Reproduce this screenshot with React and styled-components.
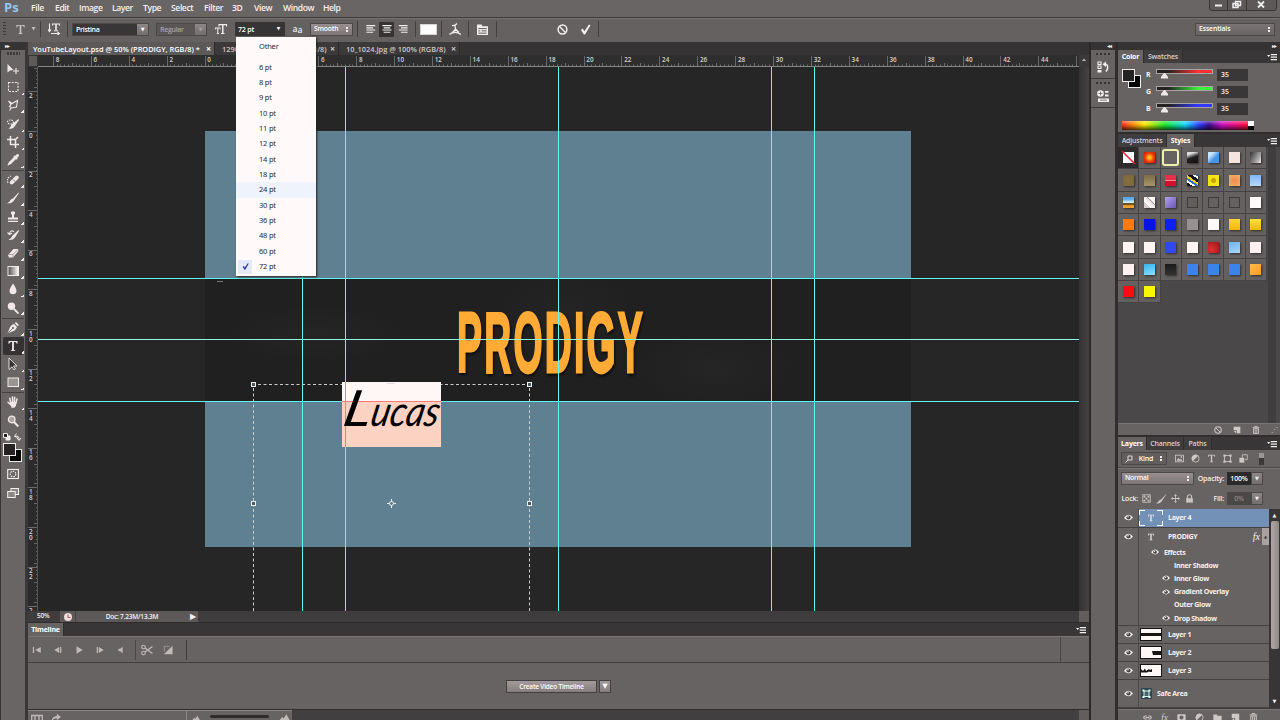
import styled, { createGlobalStyle } from "styled-components";

const MENUS = [
  ["File", 24], ["Edit", 24], ["Image", 33], ["Layer", 31], ["Type", 28], ["Select", 33],
  ["Filter", 28], ["3D", 22], ["View", 29], ["Window", 40], ["Help", 20],
];

const SIZES = ["6", "8", "9", "10", "11", "12", "14", "18", "24", "30", "36", "48", "60", "72"];

const NONE = "linear-gradient(45deg, #fff 45%, #fff 55%)";

const STYLES = [
  NONE,
  "radial-gradient(#ffd21c 10%, #f33c0c 55%, #b81a0a)",
  "#65625f",
  "linear-gradient(160deg, #ddd 20%, #222 50%, #111)",
  "linear-gradient(135deg, #c8e6ff 25%, #4794e6 60%)",
  "#f5e4e0",
  "linear-gradient(120deg, #333, #aaa 70%, #eee)",
  "radial-gradient(#8a6f3c, #77683f)",
  "linear-gradient(#7d6b46, #a8956a)",
  "linear-gradient(#e8304a 45%, #ff8b93 50%, #d3102c 56%)",
  "repeating-linear-gradient(35deg, #111 0 3px, #fff 3px 5px, #2b6fc8 5px 7px, #f0d21e 7px 9px)",
  "radial-gradient(#c9a500 25%, #f6e516 40%)",
  "radial-gradient(#f08a4e, #f5b365)",
  "linear-gradient(#7db7f4, #b4d9fb)",
  "linear-gradient(#5ca9e8 20%, #f4fbff 55%, #3a2504 60%, #f0a32a 80%)",
  "linear-gradient(45deg, #d8cfcc 30%, #fff 32%, #e8dedc 60%, #9c9492 64%, #fff 70%)",
  "linear-gradient(135deg, #b2a2ee, #6a56b8)",
  "#615e5c",
  "#646160",
  "#646160",
  "#fffafa",
  "#ff7a0a",
  "#0712e6",
  "#0d1ff2",
  "#979192",
  "#fff8f8",
  "linear-gradient(#ffd52e, #f5b411)",
  "linear-gradient(#ffe03c, #f2b50e)",
  "#fff4f4", "#fff4f4", "#3048ee", "#fff4f4",
  "radial-gradient(at 30% 70%, #e03030, #961a1c)",
  "linear-gradient(160deg, #6fb2ec, #a9d8fb)",
  "#fff0f0",
  "#fff0f2",
  "linear-gradient(160deg, #36b4ea, #8be0ff)",
  "linear-gradient(#1a1a1a, #333)",
  "#3b83e8", "#3b83e8", "#3b83e8",
  "linear-gradient(135deg, #ffbd50, #f79a1c)",
  "#fa0d10",
  "#f8f800",
];

// swatches that are only an outline in the grid
const OUTLINED = [17, 18, 19];

const EFFECTS = [
  ["Inner Shadow", false],
  ["Inner Glow", true],
  ["Gradient Overlay", true],
  ["Outer Glow", false],
  ["Drop Shadow", true],
];

const CHANNELS = [
  ["R", "#ff3030"],
  ["G", "#3cf03c"],
  ["B", "#3438ff"],
];

/* ---------------------- ICONS ---------------------- */

const Icon = ({ size = 12, children }) => (
  <svg width={size} height={size} viewBox="0 0 12 12" fill="currentColor" stroke="none">
    {children}
  </svg>
);

const line = { fill: "none", stroke: "currentColor", strokeWidth: 1.1 };

const TypeGlyph = () => <path d="M1.5 1H10.500V3.800H9.700Q9.500 2 8.200 2H6.900V9.400Q6.900 10.200 8.200 10.300V11H3.800V10.300Q5.100 10.200 5.100 9.400V2H3.800Q2.500 2 2.300 3.800H1.500Z" />;

const ICONS = {
  move: (
    <>
      <path d="M0.500 1V9.500L2.800 7.500L6.500 7Z" />
      <path {...line} d="M9 5V11M6 8H12" />
    </>
  ),
  marquee: <rect {...line} x="1.500" y="1.500" width="9.500" height="9" strokeDasharray="2 1.200" />,
  lasso: <path {...line} d="M1.500 2L5 4.500L10.500 1.500L9.500 8L4.500 9L2.500 7.500L4 5.500L1.500 2M4 9L2.500 11.500" />,
  quick: (
    <>
      <ellipse {...line} cx="3.500" cy="4" rx="3" ry="2" strokeDasharray="1.500 1" />
      <path d="M11.500 1L12 2L7.500 8.500Q6 11.500 1.500 10.500Q4 9 4.500 6.500Z" />
    </>
  ),
  crop: <path {...line} strokeWidth="1.500" d="M3.500 0V8.500H12M0 3.500H8.500V12M8 4L11 1" />,
  dropper: <path d="M8 2Q10.500 -1 11.700 0.500Q13 1.800 10 4L10.600 5L9.800 5.800L9 5L4 10L1 11.500L0.500 11L2 8L7 3L6.300 2.200L7 1.500Z" />,
  heal: (
    <>
      <path d="M3.500 7L8.500 2Q10 1 11.300 2.300Q12.300 3.500 11 5L6 10Q4.500 11 3.200 9.800Q2.200 8.500 3.500 7Z" />
      <path {...line} strokeDasharray="1.500 1" d="M1 9Q-1 4 4 2" />
      <path d="M6 5.500L8 7.500" stroke="#6a6665" strokeWidth="1" />
    </>
  ),
  brush: <path d="M11.500 0.500L12 1L7.300 8Q5.500 11.500 0 11.500Q2.500 10 3.500 8Q4.500 6.500 6 6.500Z" />,
  stamp: <path d="M4 1Q6 -0.500 8 1Q8.500 2.500 7 4V6.500H11V8.500H1V6.500H5V4Q3.500 2.500 4 1ZM1 9.700H11V11H1Z" />,
  history: (
    <>
      <path d="M11.500 1L12 2L8 8.500Q6 11.500 1.500 11Q4.500 9.500 5.500 6.500Z" />
      <path {...line} d="M7 2.500Q3 0.500 2.500 5M0.500 3.500L2.500 5.500L5 4" />
    </>
  ),
  eraser: (
    <>
      <path d="M1 8L6.500 2H11L11.500 4L6 10.500H2Z" />
      <path d="M1.500 7.500H6L11 2.500M6 7.500V10" fill="none" stroke="#8b8584" strokeWidth="0.700" />
    </>
  ),
  gradient: (
    <>
      <defs>
        <linearGradient id="toolGrad">
          <stop offset="0" stopColor="#4f4b4b" />
          <stop offset="1" stopColor="#fff" />
        </linearGradient>
      </defs>
      <rect x="1" y="1.500" width="10.500" height="9" fill="url(#toolGrad)" stroke="currentColor" />
    </>
  ),
  blur: <path d="M6 0.500Q9.500 5.500 9.500 8Q9.200 11.300 6 11.300Q2.800 11.300 2.500 8Q2.500 5.500 6 0.500Z" />,
  dodge: (
    <>
      <circle cx="4.500" cy="4.300" r="3.700" />
      <path {...line} strokeWidth="1.800" d="M7 7L11.500 11.500" />
    </>
  ),
  pen: (
    <>
      <path d="M9 0L12 3L10.700 4.300L7.700 1.300ZM7 2L10 5Q9 9 2.500 10.500L0.500 11.500L1.500 9Q3 3 7 2Z" />
      <path d="M1 11L5.500 6.500" stroke="#5b5756" strokeWidth="0.800" />
      <circle cx="6" cy="6" r="1" fill="#5b5756" />
    </>
  ),
  type: <TypeGlyph />,
  path: <path d="M2 0L10 8L6.500 8L8.500 11L7 12L5 8.800L2 11.500Z" fill="#343232" stroke="currentColor" strokeWidth="0.900" />,
  rect: <rect x="1" y="2" width="10.500" height="8.500" fill="#999392" stroke="currentColor" strokeWidth="1" />,
  hand: (
    <>
      <path d="M3 6H9.500L9 9.500L7.500 11.700H4.500Z" />
      <path {...line} strokeWidth="1.500" strokeLinecap="round" d="M3.700 7L2.800 2.200M5.500 6V0.900M7.300 6L7.700 1.200M8.900 7L10 3M4 9L1 6.300" />
    </>
  ),
  zoom: (
    <>
      <circle cx="4.700" cy="4.500" r="3.300" fill="#aaa4a3" stroke="currentColor" strokeWidth="1.300" />
      <path {...line} strokeWidth="1.900" d="M7 7L11.300 11.500" />
    </>
  ),
  mask: (
    <>
      <rect {...line} x="0.700" y="1.500" width="10.700" height="9" />
      <circle {...line} cx="6" cy="6" r="2.800" strokeDasharray="1.600 0.900" />
    </>
  ),
  screen: (
    <>
      <rect x="4" y="1.500" width="7.500" height="6" fill="#8b8584" stroke="currentColor" />
      <rect x="0.700" y="4.500" width="7.500" height="6" fill="#8b8584" stroke="currentColor" />
    </>
  ),
  orient: (
    <>
      <path d="M4 0.500H12V2.800H11.200V1.500H8.800V7H7.200V1.500H4.800V2.800H4ZM6 7.300H10V8.300H6Z" />
      <path {...line} d="M1.500 0.500V8M0 6.500L1.500 8.500L3 6.500M3 10.500H11M9.500 9L11.500 10.500L9.500 12" />
    </>
  ),
  sizes: <path d="M3.500 1H12V3.500H11V2.300H8.500V10H9.500V11H6V10H7V2.300H4.500V3.500H3.500ZM0 4.500H5.500V6.500H4.800V5.500H3.300V10H4V11H1.800V10H2.300V5.500H0.800V6.500H0Z" />,
  left: <path {...line} strokeWidth="1.400" d="M0.500 2H11M0.500 4.600H8.500M0.500 7.200H11M0.500 9.900H8.500" />,
  center: <path {...line} strokeWidth="1.400" d="M0.500 2H11.500M2 4.600H10M0.500 7.200H11.500M2 9.900H10" />,
  right: <path {...line} strokeWidth="1.400" d="M1 2H11.500M3.500 4.600H11.500M1 7.200H11.500M3.500 9.900H11.500" />,
  warp: <path {...line} strokeWidth="1.300" d="M3 2.500Q6 3 8 0.500M6 2.500L6.500 6.500M6.500 6L3.500 9.500M6.500 6L10 9.500M0.500 11.500Q6 7 12 11.500" />,
  panel: (
    <>
      <path d="M0 0.500H5L6 2.500H12V12H0Z" />
      <path d="M1.500 5H10.500M1.500 7.500H3.500M5 7.500H10.500M1.500 10H10.500" stroke="#514d4d" strokeWidth="1" />
    </>
  ),
  cancel: (
    <>
      <circle {...line} strokeWidth="1.600" cx="6" cy="6" r="4.800" />
      <path {...line} strokeWidth="1.500" d="M2.800 2.800L9.200 9.200" />
    </>
  ),
  check: <path d="M1 6.500L3 5L4.800 7.800L9.800 0.500L11.500 1.300L5.500 11.500H4.300Z" />,
  eye: (
    <>
      <path d="M0 6.500Q5.500 -1.500 12 6Q6.500 13 0 6.500Z" />
      <circle cx="6" cy="6" r="2.800" fill="#484545" />
      <circle cx="5.300" cy="5" r="1" />
    </>
  ),
  menu: <path d="M0 3.500H4L2 6ZM4.500 2.500H12V4H4.500ZM4.500 5.500H12V7H4.500ZM4.500 8.500H12V10H4.500Z" />,
  historyPanel: (
    <>
      <path {...line} d="M1 1H4V3.500H1ZM1 5H4V7.500H1Z" />
      <path d="M0.500 9H4.500V11.500H0.500Z" />
      <path {...line} strokeWidth="1.500" d="M7 3.500Q11.500 2.500 10.500 8L9 10.500" />
      <path d="M9 0.500V6L5.500 3.300Z" />
    </>
  ),
  propsPanel: (
    <>
      <circle cx="3.500" cy="3.500" r="3.300" />
      <path d="M8 1H11.500V2.800H8ZM8 4.500H11.500V6.500H8ZM1 8.500H12V12H1Z" />
      <path d="M3.500 1.500V5.500M1.500 3.500H5.500M3 10.200H10" stroke="#625e5d" strokeWidth="0.800" />
    </>
  ),
  newDoc: <path d="M1 1H11V11H5.500V6.500H1ZM1 7.500H4.500V11Z" />,
  trash: <path {...line} strokeWidth="1.300" d="M1 2.500H11M4 2V0.800H8V2M2.300 4H9.700V11.300H2.300ZM4.800 5V10.500M7.200 5V10.500" />,
  image: (
    <>
      <rect {...line} x="0.600" y="1.600" width="10.800" height="8.800" />
      <path d="M2 9L4.500 5L6.500 7.500L8 6L10 9ZM7.500 3H9.500V5H7.500Z" />
    </>
  ),
  adjust: (
    <>
      <circle {...line} cx="6" cy="6" r="4.800" />
      <path d="M9.400 2.600A4.800 4.800 0 0 0 2.600 9.400Z" />
    </>
  ),
  shape: (
    <>
      <rect {...line} x="2" y="2" width="8" height="8" />
      <path d="M0.500 0.500H3.500V3.500H0.500ZM8.500 0.500H11.500V3.500H8.500ZM0.500 8.500H3.500V11.500H0.500ZM8.500 8.500H11.500V11.500H8.500Z" />
    </>
  ),
  smart: (
    <>
      <path {...line} d="M4.500 5V1H11V7.500H8" />
      <path d="M0.500 5H7V11.500H0.500Z" />
    </>
  ),
  checker: (
    <>
      <rect {...line} x="1" y="1" width="10" height="10" />
      <path d="M2 2H4.500V4.500H2ZM7.500 2H10V4.500H7.500ZM4.700 4.700H7.300V7.300H4.700ZM2 7.500H4.500V10H2ZM7.500 7.500H10V10H7.500Z" />
    </>
  ),
  cross: <path d="M6 0L8 2.500H6.600V5.400H9.500V4L12 6L9.500 8V6.600H6.600V9.500H8L6 12L4 9.500H5.400V6.600H2.500V8L0 6L2.500 4V5.400H5.400V2.500H4Z" />,
  lock: (
    <>
      <path {...line} strokeWidth="1.400" d="M3.300 6V3Q3.500 1 6 1Q8.500 1 8.700 3V6" />
      <path d="M1.500 5.500H10.500V11.500H1.500Z" />
    </>
  ),
  link: <path {...line} strokeWidth="1.500" d="M5 4H3Q1 4 1 6Q1 8 3 8H5M7 4H9Q11 4 11 6Q11 8 9 8H7M3.500 6H8.500" />,
  maskAdd: <path fillRule="evenodd" d="M0.500 1.500H11.500V10.500H0.500ZM6 3.300A2.700 2.700 0 1 0 6.010 3.300Z" />,
  folder: <path d="M0.500 2H5L6 3.500H11.500V11H0.500Z" />,
  first: <path d="M1 2.500H2.500V9.500H1ZM10.500 2.500V9.500L4 6Z" />,
  prev: <path d="M8.500 2.500H10V9.500H8.500ZM7.500 2.500V9.500L1.500 6Z" />,
  play: <path d="M3 1.500V10.500L10.500 6Z" />,
  next: <path d="M2 2.500H3.500V9.500H2ZM4.500 2.500V9.500L10.500 6Z" />,
  speaker: <path d="M3 4.500H5L8 2V10L5 7.500H3Z" />,
  scissors: (
    <>
      <circle {...line} cx="2.500" cy="3" r="1.800" />
      <circle {...line} cx="2.500" cy="9" r="1.800" />
      <path {...line} strokeWidth="1.400" d="M4 4L11.500 9.500M4 8L11.500 2.500" />
    </>
  ),
  split: (
    <>
      <path d="M11.500 1V11H1Z" />
      <path {...line} d="M1.500 8V1.500H8" strokeWidth="0.700" />
    </>
  ),
  film: <path {...line} strokeWidth="1.300" d="M0.700 3.500H11.300V9H0.700ZM4 3.500V9M8 3.500V9" />,
  share: <path d="M7 1L12 4.800L7 8.500V6.300Q2.500 6 1 10.500Q0.500 4 7 3.500Z" />,
  mountain: <path d="M0 9.500L3.500 5.500L5 7L8 2.500L12 9.500Z" />,
};

const Glyph = ({ name, size }) => <Icon size={size}>{ICONS[name]}</Icon>;

const TOOL_GROUPS = [
  ["move", "marquee", "lasso", "quick", "crop", "dropper"],
  ["heal", "brush", "stamp", "history", "eraser", "gradient", "blur", "dodge"],
  ["pen", "type", "path", "rect"],
  ["hand", "zoom"],
];

/* ---------------------- RULERS ---------------------- */

const range = (n) => Array.from({ length: n }, (_, i) => i);

const HorizontalRuler = () => {
  const step = 37.9;
  return (
    <svg width="1041" height="12">
      {range(28).map((i) => {
        const x = 167 + (i - 4) * step;
        return (
          <g key={i}>
            <path d={`M${Math.floor(x) + 0.5} 1V12`} stroke="#666" />
            <RulerText x={x + 2.3} y="7">{Math.abs((i - 4) * 2)}</RulerText>
          </g>
        );
      })}
      {range(275).map((i) => (
        <path key={i} d={`M${Math.floor(15.400 + i * step / 10) + 0.5} ${i % 5 === 0 ? 8 : 9.500}V12`} stroke="#6f6f6f" />
      ))}
      <path d="M0 11.500H1041" stroke="#858585" />
    </svg>
  );
};

const VerticalRuler = () => {
  const step = 39.6;
  return (
    <svg width="10" height="544">
      {range(14).map((i) => {
        const y = 64 + (i - 1) * step;
        return (
          <g key={i}>
            <path d={`M0 ${Math.round(y) + 0.5}H10`} stroke="#6b6b6b" />
            {String(Math.abs((i - 1) * 2)).split("").map((digit, n) => (
              <RulerText key={n} x="1" y={y + 6.5 + n * 6}>{digit}</RulerText>
            ))}
          </g>
        );
      })}
      {range(137).map((i) => (
        <path key={i} d={`M${i % 5 === 0 ? 6 : 8} ${Math.round(i * step / 10 + 0.5) + 0.5}H10`} stroke="#666" />
      ))}
      <path d="M9.500 0V544" stroke="#555" />
    </svg>
  );
};

/* ---------------------- DOCUMENT ---------------------- */

const Canvas = () => (
  <Board>
    <Artboard>
      <Band />
    </Artboard>
    <Artwork width="1041" height="544" viewBox="38 67 1041 544">
      <Headline x="457" y="372" textLength="188" lengthAdjust="spacingAndGlyphs">PRODIGY</Headline>
      <path d="M217 281.500H223" stroke="#777" />
      <g stroke="#62f4ee" strokeWidth="1">
        <path d="M38 278.500H1079M38 401.500H1079M302.500 67V611M345.500 67V611M558.500 67V611M771.500 67V611M814.500 67V611" />
        <path d="M38 339.500H1079" stroke="#8cf5dc" />
      </g>
      <path d="M253.500 611V384.500H529.500V611" fill="none" stroke="#ccc" strokeDasharray="3 2.500" />
      <rect x="342" y="382" width="99" height="65" fill="#fff6f6" />
      <rect x="342" y="401" width="99" height="46" fill="#fcd3c3" />
      <path d="M342 401.500H441M345.500 382V447" stroke="#ff7777" />
      <path d="M387 383.500H395" stroke="#ddd" />
      <Script x="342" y="426" transform="translate(89.5 0) skewX(-12)">
        <tspan fontSize="50" textLength="28" lengthAdjust="spacingAndGlyphs">L</tspan>
        <tspan fontSize="42" textLength="68" lengthAdjust="spacingAndGlyphs">ucas</tspan>
      </Script>
      {[[253, 384], [529, 384], [253, 503], [529, 503]].map(([x, y]) => (
        <rect key={`${x}-${y}`} x={x - 1.500} y={y - 1.500} width="4" height="4" fill="#4b5a61" stroke="#eee" />
      ))}
      <path d="M391.500 499V508M387 503.500H396" stroke="#eee" />
      <circle cx="391.500" cy="503.500" r="2" fill="#5f8090" stroke="#eee" />
    </Artwork>
  </Board>
);

const Timeline = () => (
  <TimelinePanel>
    <TabStrip>
      <PanelTab $active $w={36}>Timeline</PanelTab>
      <Spacer />
      <PanelMenu><Glyph name="menu" size={10} /></PanelMenu>
    </TabStrip>
    <TimelineControls>
      <PlaybackButtons>
        {["first", "prev", "play", "next", "speaker"].map((name) => (
          <Glyph key={name} name={name} size={10} />
        ))}
      </PlaybackButtons>
      <EditButtons>
        <Glyph name="scissors" size={12} />
        <Glyph name="split" size={10} />
      </EditButtons>
      <TimelineTail />
    </TimelineControls>
    <TimelineBody>
      <CreateButton>Create Video Timeline</CreateButton>
      <CreateArrow>▼</CreateArrow>
    </TimelineBody>
    <TimelineFooter>
      <FooterLeft>
        <Glyph name="film" size={12} />
        <Glyph name="share" size={10} />
      </FooterLeft>
      <FooterZoom>
        <Glyph name="mountain" size={8} />
        <ZoomTrack />
        <Glyph name="mountain" size={11} />
      </FooterZoom>
      <FooterScroll />
    </TimelineFooter>
  </TimelinePanel>
);

/* ---------------------- PANELS ---------------------- */

const ColorPanel = () => (
  <>
    <TabStrip>
      <PanelTab $active $w={26}>Color</PanelTab>
      <PanelTab $w={39}>Swatches</PanelTab>
      <Spacer />
      <PanelMenu><Glyph name="menu" size={10} /></PanelMenu>
    </TabStrip>
    <ColorBody>
      <ColorMain>
        <SwatchPair $size={13} $shift={6}><i /><i /></SwatchPair>
        <Sliders>
          {CHANNELS.map(([name, color]) => (
            <SliderRow key={name}>
              <b>{name}</b>
              <Track $color={color}><Knob /></Track>
              <ValueBox>35</ValueBox>
            </SliderRow>
          ))}
        </Sliders>
      </ColorMain>
      <Spectrum><SpectrumEnd /></Spectrum>
    </ColorBody>
  </>
);

const StylesPanel = () => (
  <>
    <TabStrip>
      <PanelTab $w={49}>Adjustments</PanelTab>
      <PanelTab $active $w={28}>Styles</PanelTab>
      <Spacer />
      <PanelMenu><Glyph name="menu" size={10} /></PanelMenu>
    </TabStrip>
    <StylesBody>
      <StyleGrid>
        {STYLES.map((fill, i) => (
          <StyleCell key={i} $dark={i === 0}>
            <StyleChip $fill={fill} $outlined={OUTLINED.includes(i)} $picked={i === 2} $slash={i === 0}>
              {i === 0 && (
                <svg width="15" height="15"><path d="M1 1L14 14" stroke="#e8202c" strokeWidth="1.500" /></svg>
              )}
            </StyleChip>
          </StyleCell>
        ))}
      </StyleGrid>
    </StylesBody>
    <StylesFooter>
      <Glyph name="cancel" size={8} />
      <Glyph name="newDoc" size={8} />
      <Glyph name="trash" size={8} />
      <Grip>⋰</Grip>
    </StylesFooter>
  </>
);

const LayersPanel = () => (
  <>
    <TabStrip>
      <PanelTab $active $w={29}>Layers</PanelTab>
      <PanelTab $w={37}>Channels</PanelTab>
      <PanelTab $w={28}>Paths</PanelTab>
      <Spacer />
      <PanelMenu><Glyph name="menu" size={10} /></PanelMenu>
    </TabStrip>
    <FilterRow>
      <KindSelect>
        <svg width="8" height="8" viewBox="0 0 8 8"><path d="M3 5L0.500 7.500M3 1H7V5H3Z" fill="none" stroke="#ddd" /></svg>
        <span>Kind</span>
        <Stepper />
      </KindSelect>
      <FilterIcons>
        {["image", "adjust", "type", "shape", "smart"].map((name) => (
          <Glyph key={name} name={name} size={9} />
        ))}
        <FilterToggle />
      </FilterIcons>
    </FilterRow>
    <BlendRow>
      <BlendSelect><span>Normal</span><Stepper /></BlendSelect>
      <FieldLabel $w={30}>Opacity:</FieldLabel>
      <NumberBox>100%</NumberBox>
      <DropArrow>▼</DropArrow>
    </BlendRow>
    <LockRow>
      <FieldLabel $w={20}>Lock:</FieldLabel>
      <LockIcons>
        <Glyph name="checker" size={9} />
        <Glyph name="brush" size={10} />
        <Glyph name="cross" size={9} />
        <Glyph name="lock" size={9} />
      </LockIcons>
      <FieldLabel $w={15}>Fill:</FieldLabel>
      <NumberBox $muted>0%</NumberBox>
      <DropArrow>▼</DropArrow>
    </LockRow>
    <LayerArea>
      <LayerList>
        <LayerRow $selected>
          <EyeCell><Glyph name="eye" size={9} /></EyeCell>
          <TypeThumb $framed><Glyph name="type" size={8} /></TypeThumb>
          <LayerName>Layer 4</LayerName>
        </LayerRow>
        <LayerRow $open>
          <EyeCell><Glyph name="eye" size={9} /></EyeCell>
          <TypeThumb><Glyph name="type" size={8} /></TypeThumb>
          <LayerName>PRODIGY</LayerName>
          <Fx>fx</Fx>
          <FxArrow>▲</FxArrow>
        </LayerRow>
        <EffectBlock>
          <EyeCell />
          <EffectList>
            <EffectHead><Glyph name="eye" size={8} /><span>Effects</span></EffectHead>
            {EFFECTS.map(([name, on]) => (
              <Effect key={name}>
                <EffectEye>{on && <Glyph name="eye" size={8} />}</EffectEye>
                {name}
              </Effect>
            ))}
          </EffectList>
        </EffectBlock>
        {[1, 2, 3].map((n) => (
          <LayerRow key={n}>
            <EyeCell><Glyph name="eye" size={9} /></EyeCell>
            <Thumb>
              {n === 1 && <path d="M0 4H20V7H0Z" fill="#181515" />}
              {n === 2 && <path d="M11 4H20V8H12Z" fill="#181515" />}
              {n === 3 && <path d="M0 4L2 6L4 3.500L5 6L8 4L9 5L11 4V7H9L8 6.500L6 7.500H0Z" fill="#181515" />}
            </Thumb>
            <LayerName>Layer {n}</LayerName>
          </LayerRow>
        ))}
        <LayerRow $tall>
          <EyeCell><Glyph name="eye" size={9} /></EyeCell>
          <SafeIcon>
            <svg width="11" height="11" viewBox="0 0 11 11">
              <path d="M0 0H11V11H0Z" fill="#2d4650" />
              <path d="M3 3H8V8.500H3Z" fill="#45656f" stroke="#d9f4e4" />
              <path d="M1.500 1.500H3.500V3.500H1.500ZM7.500 1.500H9.500V3.500H7.500ZM1.500 8H3.500V10H1.500ZM7.500 8H9.500V10H7.500Z" fill="#e8fbef" />
            </svg>
          </SafeIcon>
          <SafeName>Safe Area</SafeName>
        </LayerRow>
      </LayerList>
      <LayerScroll>
        <span>▲</span>
        <LayerThumb />
        <Spacer />
        <span>▼</span>
      </LayerScroll>
    </LayerArea>
    <LayersFooter>
      <Glyph name="link" size={9} />
      <FooterFx>fx</FooterFx>
      {["maskAdd", "adjust", "folder", "newDoc", "trash"].map((name) => (
        <Glyph key={name} name={name} size={9} />
      ))}
    </LayersFooter>
  </>
);

const App = () => (
  <Window>
    <Global />
    <MenuBar>
      <Logo>Ps</Logo>
      {MENUS.map(([label, w]) => (
        <MenuItem key={label} $w={w}>{label}</MenuItem>
      ))}
      <Spacer />
      <WindowButtons>
        <svg width="68" height="11">
          <path d="M0.500 0V8Q0.500 10.500 3 10.500H65Q67.500 10.500 67.500 8V0M18.500 0V10M37.500 0V10" fill="#5d5959" stroke="#383636" />
          <path d="M6 5.500H13" stroke="#eee" strokeWidth="2" />
          <path d="M26.500 1.500H31.500V5.500H26.500ZM24 3.500H29V7.500H24Z" fill="#5d5959" stroke="#eee" strokeWidth="1.500" />
          <path d="M49 1.500L55 7.500M55 1.500L49 7.500" stroke="#eee" strokeWidth="1.800" />
        </svg>
      </WindowButtons>
    </MenuBar>

    <OptionsBar>
      <DragDots />
      <OptionCell $w={30} $dim><Glyph name="type" size={11} /><Caret>▼</Caret></OptionCell>
      <Divider />
      <OptionCell $w={26}><Glyph name="orient" size={12} /></OptionCell>
      <Divider />
      <Combo $w={77} $gap={4}><span>Pristina</span><ComboArrow>▼</ComboArrow></Combo>
      <Combo $w={51} $gap={7} $off><span>Regular</span><ComboArrow>▼</ComboArrow></Combo>
      <OptionCell $w={28}><Glyph name="sizes" size={12} /></OptionCell>
      <SizeCombo>
        <span>72 pt</span><Caret>▼</Caret>
        <SizeMenu>
          <SizeItem $first>Other</SizeItem>
          {SIZES.map((size) => (
            <SizeItem key={size} $hover={size === "24"}>
              {size === "72" && <CheckBox><Glyph name="check" size={7} /></CheckBox>}
              {size} pt
            </SizeItem>
          ))}
        </SizeMenu>
      </SizeCombo>
      <OptionCell $w={25}><Aa>a</Aa><Aa $low>a</Aa></OptionCell>
      <SmoothSelect><span>Smooth</span><Stepper /></SmoothSelect>
      <Divider $gap={4} />
      <AlignGroup>
        <AlignButton><Glyph name="left" size={10} /></AlignButton>
        <AlignButton $on><Glyph name="center" size={10} /></AlignButton>
        <AlignButton><Glyph name="right" size={10} /></AlignButton>
      </AlignGroup>
      <Divider />
      <OptionCell $w={25}><TextColor /></OptionCell>
      <Divider />
      <OptionCell $w={26}><Glyph name="warp" size={12} /></OptionCell>
      <Divider />
      <OptionCell $w={27}><Glyph name="panel" size={11} /></OptionCell>
      <Divider />
      <Commit>
        <Glyph name="cancel" size={11} />
        <Glyph name="check" size={11} />
      </Commit>
      <Divider />
      <Spacer />
      <Workspace><span>Essentials</span><Stepper /></Workspace>
    </OptionsBar>

    <Main>
      <ToolColumn>
        <ColumnHead $left>▸▸</ColumnHead>
        <ToolGrip />
        {TOOL_GROUPS.map((group, g) => (
          <ToolGroup key={g}>
            {group.map((name) => (
              <Tool key={name} $on={name === "type"} $plain={name === "move" || name === "zoom"}>
                <Glyph name={name} size={12} />
              </Tool>
            ))}
          </ToolGroup>
        ))}
        <SwapRow>
          <svg width="19" height="8">
            <path d="M3 3H7V7H3Z" fill="#eee" stroke="#eee" />
            <path d="M0.500 0.500H4.500V4.500H0.500Z" fill="#222" stroke="#eee" />
            <path d="M12 3.500Q16.500 2 16 7M13.500 0.500L11.500 3.500L14.500 4.500M14 5L16 7.500L18 5" fill="none" stroke="#eee" />
          </svg>
        </SwapRow>
        <SwatchPair $size={13} $shift={6}><i /><i /></SwatchPair>
        <ToolExtras>
          <Glyph name="mask" size={12} />
          <Glyph name="screen" size={12} />
        </ToolExtras>
      </ToolColumn>

      <DocColumn>
        <DocTabs>
          <DocTab $active $w={187}><DocTitle $w={169}>YouTubeLayout.psd @ 50% (PRODIGY, RGB/8) *</DocTitle><Close>×</Close></DocTab>
          <DocTab $w={124} $indent={7}><DocTitle $w={104}>1290x720.jpg @ 100% (RGB/8)</DocTitle><Close>×</Close></DocTab>
          <DocTab $w={121} $indent={7}><DocTitle $w={101}>10_1024.jpg @ 100% (RGB/8)</DocTitle><Close>×</Close></DocTab>
        </DocTabs>
        <RulerRow>
          <RulerCorner />
          <HorizontalRuler />
          <ScrollUp><svg width="6" height="8"><path d="M1 4L3 1.500L5 4Z" fill="#bbb" /></svg></ScrollUp>
        </RulerRow>
        <CanvasRow>
          <VerticalRuler />
          <Canvas />
          <DocScroll />
        </CanvasRow>
        <StatusBar>
          <ZoomLevel>50%</ZoomLevel>
          <StatusIcon><svg width="8" height="8"><circle cx="4" cy="4" r="4" fill="#eedcdc" /><path d="M4 1.500V4.500H6.500" fill="none" stroke="#a85f5f" /></svg></StatusIcon>
          <DocSize>Doc: 7.23M/13.3M</DocSize>
          <StatusArrow>▶</StatusArrow>
          <StatusScroll />
          <StatusCorner />
        </StatusBar>
        <Timeline />
      </DocColumn>

      <IconDock>
        <ColumnHead>◂◂</ColumnHead>
        <DockGroup><DockDots /><Glyph name="historyPanel" size={12} /></DockGroup>
        <DockGroup><DockDots /><Glyph name="propsPanel" size={12} /></DockGroup>
        <DockRest />
      </IconDock>

      <PanelColumn>
        <ColumnHead>▸▸</ColumnHead>
        <ColorPanel />
        <PanelGap />
        <StylesPanel />
        <PanelGap />
        <LayersPanel />
      </PanelColumn>
    </Main>
  </Window>
);

export default App;

/* ---------------------- STYLED COMPONENTS ---------------------- */

const Global = createGlobalStyle`
  * {
    box-sizing: border-box;
  }

  body {
    margin: 0;
    overflow: hidden;
    background: #3b3939;
  }

  svg {
    display: block;
    flex: none;
  }
`;

const Window = styled.div`
  display: flex;
  flex-direction: column;
  width: 1280px;
  height: 720px;
  overflow: hidden;
  font-family: "Open Sans", "Noto Sans", sans-serif;
  font-size: 7px;
  line-height: 1;
  color: #f4f0f0;
  white-space: nowrap;
`;

const Spacer = styled.div`
  flex: 1;
`;

const MenuBar = styled.div`
  display: flex;
  flex: none;
  height: 17px;
  padding-left: 4px;
  background: #6a6565;
`;

const Logo = styled.div`
  width: 27px;
  font-size: 13px;
  font-weight: 700;
  line-height: 15px;
  color: #94c5f3;
`;

const MenuItem = styled.div`
  width: ${(props) => props.$w}px;
  font-size: 8.6px;
  font-weight: 600;
  letter-spacing: -0.4px;
  line-height: 16px;
`;

const WindowButtons = styled.div`
  margin-right: 3px;
`;

const OptionsBar = styled.div`
  display: flex;
  flex: none;
  align-items: center;
  height: 25px;
  padding: 0 5px 2px 0;
  background: #656161;
  border-top: 1px solid #3e3c3c;
  box-shadow: inset 0 1px #777272;
`;

const DragDots = styled.div`
  width: 3px;
  height: 14px;
  margin: 0 4px 0 3px;
  background: repeating-linear-gradient(#3b3939 0 1px, transparent 1px 3px);
`;

const OptionCell = styled.div`
  display: flex;
  align-items: center;
  justify-content: center;
  gap: ${(props) => (props.$dim ? 6 : 0)}px;
  width: ${(props) => props.$w}px;
  height: 14px;
  color: ${(props) => (props.$dim ? "#c9c3c3" : "#f2eded")};
`;

const Caret = styled.span`
  font-family: "DejaVu Sans", sans-serif;
  font-size: 4.5px;
`;

const Divider = styled.div`
  width: 1px;
  height: 16px;
  margin-left: ${(props) => props.$gap || 0}px;
  background: #413f3f;
`;

const Combo = styled.div`
  display: flex;
  align-items: center;
  justify-content: space-between;
  width: ${(props) => props.$w}px;
  height: 13px;
  margin-left: ${(props) => props.$gap}px;
  padding-left: 3px;
  background: ${(props) => (props.$off ? "#5a5656" : "#383636")};
  border: 1px solid #4b4848;
  color: ${(props) => (props.$off ? "#a8a2a2" : "#fff")};
  font-size: 7px;
  font-weight: 600;
  letter-spacing: -0.3px;
`;

const ComboArrow = styled.div`
  display: grid;
  place-items: center;
  width: 11px;
  height: 11px;
  background: linear-gradient(#8e8787, #736d6d);
  font-family: "DejaVu Sans", sans-serif;
  font-size: 5px;
`;

const SizeCombo = styled.div`
  position: relative;
  display: flex;
  align-items: center;
  justify-content: space-between;
  width: 50px;
  height: 14px;
  padding: 0 5px 0 3px;
  background: #363434;
  color: #fff;
  font-size: 7px;
  font-weight: 600;
  letter-spacing: -0.2px;
`;

const SizeMenu = styled.div`
  position: absolute;
  z-index: 5;
  top: 15px;
  left: 1px;
  width: 80px;
  height: 239px;
  padding-top: 2px;
  background: #fff9fa;
  box-shadow: 1px 1px 2px #222;
`;

const SizeItem = styled.div`
  display: flex;
  align-items: center;
  height: 15.33px;
  margin-bottom: ${(props) => (props.$first ? "5.5px" : 0)};
  padding-left: 23px;
  background: ${(props) => (props.$hover ? "#eff3fc" : "none")};
  color: #292929;
  font-family: "Noto Sans", sans-serif;
  font-size: 7.5px;
  font-weight: 400;
`;

const CheckBox = styled.div`
  display: grid;
  place-items: center;
  width: 14px;
  height: 14px;
  margin: 0 7px 0 -21px;
  background: #e4eafb;
  color: #343c91;
`;

const Aa = styled.span`
  padding-top: ${(props) => (props.$low ? 3 : 0)}px;
  font-size: 8.5px;
  font-weight: 600;
`;

const Stepper = styled.i`
  width: 4px;
  height: 7px;
  background:
    conic-gradient(from 153deg at 50% 0, #eee 54deg, transparent 0) 0 0 / 4px 3px no-repeat,
    conic-gradient(from -27deg at 50% 100%, #eee 54deg, transparent 0) 0 100% / 4px 3px no-repeat;
`;

const SmoothSelect = styled.div`
  display: flex;
  align-items: center;
  justify-content: space-between;
  width: 43px;
  height: 13px;
  padding: 0 3px 0 3px;
  background: linear-gradient(#989090, #7d7676);
  border: 1px solid #4c4949;
  color: #fff;
  font-size: 6.8px;
  font-weight: 600;
  letter-spacing: -0.2px;
`;

const Workspace = styled(SmoothSelect)`
  width: 80px;
  background: linear-gradient(#7b7575, #686363);
  letter-spacing: -0.1px;
`;

const AlignGroup = styled.div`
  display: flex;
  justify-content: space-between;
  width: 57px;
  padding: 0 5px 0 5px;
`;

const AlignButton = styled.div`
  display: grid;
  place-items: center;
  width: 15px;
  height: 15px;
  background: ${(props) => (props.$on ? "#353333" : "none")};
`;

const TextColor = styled.div`
  width: 17px;
  height: 11px;
  background: #fff;
  border: 1px solid #d9d2d2;
`;

const Commit = styled.div`
  display: flex;
  align-items: center;
  gap: 12px;
  width: 101px;
  padding-left: 60px;
`;

const Main = styled.div`
  display: flex;
  flex: 1;
  min-height: 0;
`;

const ColumnHead = styled.div`
  flex: none;
  height: 8px;
  padding: 0 4px;
  background: #353333;
  font-family: "DejaVu Sans", sans-serif;
  font-size: 6px;
  line-height: 8px;
  letter-spacing: -1px;
  text-align: ${(props) => (props.$left ? "left" : "right")};
`;

const ToolColumn = styled.div`
  display: flex;
  flex-direction: column;
  width: 28px;
  background: #696564;
  border-left: 1px solid #353333;
  border-right: 3px solid #393737;
`;

const ToolGrip = styled.div`
  flex: none;
  width: 13px;
  height: 3px;
  margin: 2px 0 5px 6px;
  background: repeating-linear-gradient(90deg, #3f3d3d 0 2px, transparent 2px 3px);
`;

const ToolGroup = styled.div`
  display: flex;
  flex: none;
  flex-direction: column;
  align-items: center;
  margin: 0 1px 1px;

  & + & {
    border-top: 1px solid #454242;
  }
`;

const Tool = styled.div`
  display: grid;
  place-items: center;
  width: 21px;
  height: 18.2px;
  border-radius: 2px;
  background:
    ${(props) => (props.$plain ? "" : "linear-gradient(135deg, transparent 50%, #f4f0f0 50%) 18px 14px / 3px 3px no-repeat,")}
    ${(props) => (props.$on ? "#343232" : "transparent")};
  color: #f1e9e9;
`;

const SwapRow = styled.div`
  height: 12px;
  padding: 2px 0 0 2px;
`;

const SwatchPair = styled.div`
  display: grid;
  flex: none;
  width: 20px;
  height: ${(props) => props.$size + props.$shift}px;
  margin-left: 2px;

  i {
    grid-area: 1 / 1;
    width: ${(props) => props.$size}px;
    height: ${(props) => props.$size}px;
    background: #232323;
    border: 1px solid #f2eded;
    z-index: 1;
  }

  i + i {
    margin: ${(props) => `${props.$shift}px 0 0 ${props.$shift}px`};
    background: #000;
    z-index: 0;
  }
`;

const ToolExtras = styled.div`
  display: flex;
  flex-direction: column;
  align-items: center;
  gap: 7px;
  margin-top: 6px;
`;

const DocColumn = styled.div`
  display: flex;
  flex-direction: column;
  width: 1061px;
  background: #3b3939;
`;

const DocTabs = styled.div`
  display: flex;
  flex: none;
  height: 13px;
  background: #353333;
`;

const DocTab = styled.div`
  display: flex;
  flex: none;
  align-items: center;
  gap: 4px;
  width: ${(props) => props.$w}px;
  padding-left: ${(props) => props.$indent || 5}px;
  background: ${(props) => (props.$active ? "#5d5959" : "#3b3939")};
  box-shadow: inset -1px 0 #2c2a2a;
  color: ${(props) => (props.$active ? "#fff" : "#cfc9c9")};
`;

const DocTitle = styled.span`
  flex: none;
  width: ${(props) => props.$w}px;
  font-size: 7.4px;
  font-weight: 600;
  line-height: 12px;
`;

const Close = styled.span`
  flex: none;
  font-size: 9px;
  font-weight: 700;
`;

const RulerRow = styled.div`
  display: flex;
  flex: none;
  height: 12px;
  background: #2f2e2e;
`;

const RulerCorner = styled.div`
  width: 10px;
  background: #5e5a5a;
  border: 1px solid #333;
`;

const RulerText = styled.text`
  fill: #d6d2d2;
  font-size: 6.3px;
  font-weight: 600;
`;

const ScrollUp = styled.div`
  display: grid;
  place-items: center;
  width: 10px;
  background: #3b3939;
`;

const CanvasRow = styled.div`
  display: flex;
  flex: none;
  height: 544px;
  background: #2c2b2b;
`;

const Board = styled.div`
  position: relative;
  width: 1041px;
  height: 544px;
  background: #262626;
`;

const Artboard = styled.div`
  position: absolute;
  left: 167px;
  top: 64px;
  width: 706px;
  height: 416px;
  padding-top: 148px;
  background: #5f8090;
`;

const Band = styled.div`
  height: 122px;
  background:
    radial-gradient(90px 30px at 110px 55px, #252525, transparent),
    radial-gradient(70px 40px at 360px 30px, #242424, transparent),
    radial-gradient(80px 40px at 510px 90px, #252525, transparent),
    #202020;
`;

const Artwork = styled.svg`
  position: absolute;
  inset: 0;
`;

const Headline = styled.text`
  fill: #ffab35;
  stroke: #ffab35;
  stroke-width: 2.8px;
  font-family: "Liberation Sans Narrow", "Liberation Sans", sans-serif;
  font-size: 86px;
  font-weight: 700;
  letter-spacing: 5px;
  filter: drop-shadow(1.5px 2px 1px #0c0c0c);
`;

const Script = styled.text`
  fill: #000;
  font-family: Lato, sans-serif;
  font-style: italic;
`;

const DocScroll = styled.div`
  width: 10px;
  background: linear-gradient(90deg, #333131, #454343);
`;

const StatusBar = styled.div`
  display: flex;
  flex: none;
  align-items: center;
  height: 12px;
  background: #3e3c3c;
  border-bottom: 1px solid #2d2b2b;
  font-size: 6.5px;
  font-weight: 600;
  letter-spacing: -0.2px;
`;

const ZoomLevel = styled.div`
  width: 32px;
  padding-left: 9px;
`;

const StatusIcon = styled.div`
  display: grid;
  place-items: center;
  width: 16px;
  height: 11px;
  background: #5d5959;
  border-right: 1px solid #474444;
`;

const DocSize = styled.div`
  width: 112px;
  height: 11px;
  background: #5d5959;
  line-height: 11px;
  text-align: center;
`;

const StatusArrow = styled.div`
  width: 10px;
  height: 11px;
  padding-left: 2px;
  background: #5d5959;
  font-family: "DejaVu Sans", sans-serif;
  font-size: 8px;
  line-height: 11px;
`;

const StatusScroll = styled.div`
  flex: 1;
`;

const StatusCorner = styled.div`
  width: 10px;
  height: 11px;
  background: #625e5e;
`;

const TimelinePanel = styled.div`
  display: flex;
  flex: 1;
  flex-direction: column;
  min-height: 0;
  overflow: hidden;
`;

const TabStrip = styled.div`
  display: flex;
  flex: none;
  height: 13px;
  background: #383636;
`;

const PanelTab = styled.div`
  width: ${(props) => props.$w}px;
  height: 13px;
  background: ${(props) => (props.$active ? "#676362" : "#3f3d3d")};
  border-right: 1px solid #2f2d2d;
  color: ${(props) => (props.$active ? "#fff" : "#d6d0d0")};
  font-size: 7px;
  font-weight: ${(props) => (props.$active ? 700 : 600)};
  letter-spacing: -0.2px;
  line-height: 13px;
  text-align: center;
`;

const PanelMenu = styled.div`
  display: grid;
  place-items: center;
  width: 16px;
`;

const TimelineControls = styled.div`
  display: flex;
  flex: none;
  align-items: center;
  height: 27px;
  background: #676362;
  border-top: 1px solid #7a7575;
  border-bottom: 1px solid #3f3d3d;
  color: #bfb9b8;
`;

const PlaybackButtons = styled.div`
  display: flex;
  gap: 11px;
  width: 107px;
  padding-left: 4px;
`;

const EditButtons = styled.div`
  display: flex;
  align-items: center;
  justify-content: space-between;
  width: 52px;
  height: 20px;
  padding: 0 13px 0 5px;
  border-left: 1px solid #4a4747;
  border-right: 1px solid #3f3d3d;
`;

const TimelineTail = styled.div`
  width: 874px;
  height: 25px;
  border-right: 1px solid #4a4747;
`;

const TimelineBody = styled.div`
  display: flex;
  flex: none;
  align-items: center;
  justify-content: center;
  gap: 2px;
  height: 46px;
  background: #676362;
`;

const CreateButton = styled.div`
  width: 91px;
  height: 13px;
  background: linear-gradient(#a49b9b, #867e7e);
  border: 1px solid #423f3f;
  color: #fff;
  font-size: 6.5px;
  font-weight: 600;
  letter-spacing: -0.2px;
  line-height: 11px;
  text-align: center;
`;

const CreateArrow = styled(CreateButton)`
  width: 12px;
  font-family: "DejaVu Sans", sans-serif;
`;

const TimelineFooter = styled.div`
  display: flex;
  flex: none;
  height: 14px;
  border-top: 1px solid #2f2d2d;
`;

const FooterLeft = styled.div`
  display: flex;
  align-items: center;
  gap: 8px;
  width: 159px;
  padding: 1px 0 0 3px;
  background: #676362;
  border-top: 1px solid #8b8585;
  border-right: 1px solid #8b8585;
  color: #bfb9b8;
`;

const FooterZoom = styled(FooterLeft)`
  gap: 10px;
  width: 105px;
  padding-left: 5px;
  border-right: 0;
`;

const ZoomTrack = styled.div`
  width: 59px;
  height: 3px;
  margin-bottom: 3px;
  background: #2d2b2b;
  border-radius: 2px;
`;

const FooterScroll = styled.div`
  flex: 1;
  background: #413f3f;
  border-right: 10px solid #625e5e;
`;

const IconDock = styled.div`
  display: flex;
  flex-direction: column;
  width: 28px;
  background: #3b3939;
  border-left: 2px solid #2b2929;
  border-right: 2px solid #2f2d2d;
`;

const DockGroup = styled.div`
  display: flex;
  flex: none;
  flex-direction: column;
  align-items: center;
  gap: 6px;
  height: 28px;
  margin-bottom: 1px;
  padding-top: 3px;
  background: #676362;
`;

const DockDots = styled.div`
  width: 14px;
  height: 2px;
  background: repeating-linear-gradient(90deg, #353333 0 2px, transparent 2px 4px);
`;

const DockRest = styled.div`
  flex: 1;
  background: #676362;
`;

const PanelColumn = styled.div`
  display: flex;
  flex-direction: column;
  width: 163px;
  overflow: hidden;
  background: #676362;
  border-left: 1px solid #2f2d2d;
`;

const PanelGap = styled.div`
  flex: none;
  height: 2px;
  background: #2f2d2d;
`;

const ColorBody = styled.div`
  flex: none;
  height: 69px;
  padding: 3px 4px 0;
`;

const ColorMain = styled.div`
  display: flex;
  height: 55px;

  ${SwatchPair} {
    margin: 3px 0 0 0;
  }
`;

const Sliders = styled.div`
  padding-left: 4px;
`;

const SliderRow = styled.div`
  display: flex;
  align-items: center;
  height: 17px;

  b {
    width: 10px;
    font-size: 7px;
  }
`;

const Track = styled.div`
  width: 57px;
  height: 5px;
  margin-top: -7px;
  background: linear-gradient(90deg, #222, #222 20%, ${(props) => props.$color} 75%);
  border: 1px solid #aaa3a3;
`;

const Knob = styled.div`
  width: 7px;
  height: 6px;
  margin: 3px 0 0 4px;
  background: #f0e9e9;
  clip-path: polygon(50% 0, 100% 70%, 100% 100%, 0 100%, 0 70%);
`;

const ValueBox = styled.div`
  width: 31px;
  height: 12px;
  margin-left: 4px;
  padding-left: 4px;
  background: #393737;
  font-size: 6.8px;
  font-weight: 600;
  line-height: 12px;
`;

const Spectrum = styled.div`
  display: flex;
  justify-content: flex-end;
  width: 132px;
  height: 9px;
  background:
    linear-gradient(rgba(255, 255, 255, 0.35), transparent 40%, rgba(0, 0, 0, 0.7)),
    linear-gradient(90deg, #ff3018, #ffe800 17%, #18e830 33%, #14d8ff 48%, #3038ff 59%, #40108c 66%, #d010c8 76%, #ff1040 94%);
`;

const SpectrumEnd = styled.div`
  width: 6px;
  background: linear-gradient(#fff 50%, #000 50%);
`;

const StylesBody = styled.div`
  flex: none;
  height: 276px;
  background: linear-gradient(90deg, #4a4848 150px, #3f3d3d 150px 158px, #4a4848 158px);
`;

const StyleGrid = styled.div`
  display: grid;
  grid-template-columns: repeat(7, 21.3px);
  grid-auto-rows: 22.35px;
`;

const StyleCell = styled.div`
  display: grid;
  place-items: center;
  background: ${(props) => (props.$dark ? "#2d2b2b" : "#656160")};
  border-right: 1px solid #454343;
  border-bottom: 1px solid #454343;
`;

const StyleChip = styled.div`
  display: grid;
  place-items: center;
  place-content: center;
  width: ${(props) => (props.$picked ? 17 : 11)}px;
  height: ${(props) => (props.$picked ? 17 : 11)}px;
  background: ${(props) => props.$fill};
  border: ${(props) => (props.$picked ? "2.5px solid #eef0b0" : props.$outlined ? "1px solid #3c3a3a" : "0")};
  border-radius: ${(props) => (props.$picked ? 3 : 0)}px;
  box-shadow: ${(props) => (props.$picked || props.$outlined || props.$slash ? "none" : "1px 1px 2px #2f2d2d")};
`;

const StylesFooter = styled.div`
  display: flex;
  flex: none;
  align-items: center;
  justify-content: flex-end;
  gap: 11px;
  height: 12px;
  padding-right: 2px;
  background: #676362;
  border-top: 1px solid #7b7675;
  color: #cfc9c8;
`;

const Grip = styled.span`
  font-size: 7px;
`;

const FilterRow = styled.div`
  display: flex;
  flex: none;
  align-items: center;
  height: 18px;
  padding-left: 3px;
  border-bottom: 1px solid #4b4848;
`;

const KindSelect = styled(SmoothSelect)`
  width: 46px;
  background: #625e5d;
  font-size: 7px;
`;

const FilterIcons = styled.div`
  display: flex;
  align-items: center;
  gap: 7px;
  padding-left: 8px;
  color: #cdc7c6;
`;

const FilterToggle = styled.div`
  width: 5px;
  height: 12px;
  margin-left: 4px;
  background: linear-gradient(#9b9595 40%, #3b3939 40%);
`;

const BlendRow = styled.div`
  display: flex;
  flex: none;
  align-items: center;
  height: 20px;
  padding-left: 3px;
  box-shadow: inset 0 1px #7b7675;
`;

const BlendSelect = styled(SmoothSelect)`
  width: 73px;
`;

const FieldLabel = styled.div`
  width: ${(props) => props.$w}px;
  font-size: 7px;
  font-weight: 600;
  letter-spacing: -0.2px;
  text-align: right;
`;

const NumberBox = styled.div`
  width: 24px;
  height: 13px;
  margin-left: 3px;
  background: ${(props) => (props.$muted ? "#4b4848" : "#2b2929")};
  color: ${(props) => (props.$muted ? "#8b8585" : "#fff")};
  font-size: 7px;
  font-weight: 600;
  letter-spacing: -0.2px;
  line-height: 13px;
  text-align: center;
`;

const DropArrow = styled(ComboArrow)`
  width: 12px;
  height: 13px;
  border: 1px solid #4b4848;
`;

const LockRow = styled(BlendRow)`
  height: 21px;
  padding-left: 0;
  box-shadow: none;
`;

const LockIcons = styled.div`
  display: flex;
  align-items: center;
  justify-content: space-between;
  width: 71px;
  padding: 0 15px 0 4px;
  color: #c9c3c2;
`;

const LayerArea = styled.div`
  display: flex;
  flex: none;
  height: 200px;
  border-bottom: 2px solid #3b3939;
`;

const LayerList = styled.div`
  width: 151px;
`;

const LayerRow = styled.div`
  display: flex;
  align-items: center;
  height: ${(props) => (props.$tall ? 28 : props.$selected ? 18.5 : 18)}px;
  background: ${(props) => (props.$selected ? "linear-gradient(90deg, #676362 21px, #7391b6 21px)" : "#676362")};
  border-bottom: ${(props) => (props.$open ? 0 : "1px solid #454242")};
`;

const EyeCell = styled.div`
  display: grid;
  place-items: center;
  width: 21px;
  height: 100%;
  border-right: 1px solid #4b4848;
`;

const TypeThumb = styled.div`
  display: grid;
  place-items: center;
  width: 24px;
  height: 16px;
  background: ${(props) =>
    props.$framed
      ? ["0 0", "100% 0", "0 100%", "100% 100%"]
          .flatMap((at) => [`linear-gradient(#fff, #fff) ${at} / 6px 1px no-repeat`, `linear-gradient(#fff, #fff) ${at} / 1px 5px no-repeat`])
          .join(",")
      : "none"};
`;

const LayerName = styled.span`
  padding-left: 5px;
  font-size: 7px;
  font-weight: 700;
  letter-spacing: -0.3px;
`;

const Fx = styled.span`
  margin-left: auto;
  padding-right: 2px;
  font-family: "Liberation Serif", serif;
  font-size: 10px;
  font-style: italic;
`;

const FxArrow = styled.div`
  display: grid;
  place-items: center;
  width: 7px;
  height: 17px;
  background: #aaa2a1;
  color: #333;
  font-family: "DejaVu Sans", sans-serif;
  font-size: 4px;
`;

const EffectBlock = styled.div`
  display: flex;
  height: 80.5px;
  border-bottom: 1px solid #454242;
`;

const EffectList = styled.div`
  padding-left: 12px;
  font-weight: 700;
  letter-spacing: -0.33px;
`;

const EffectHead = styled.div`
  display: flex;
  align-items: center;
  gap: 5px;
  height: 13.2px;
`;

const Effect = styled.div`
  display: flex;
  align-items: center;
  height: 13.2px;
  padding-left: 11px;
`;

const EffectEye = styled.div`
  width: 12px;
`;

const ThumbSvg = styled.svg`
  margin: 0 1px 0 1px;
  background: #fff6f6;
  border: 1px solid #151313;
`;

const Thumb = ({ children }) => (
  <ThumbSvg width="22" height="13" viewBox="0 0 20 11">{children}</ThumbSvg>
);

const SafeIcon = styled.div`
  margin-left: 2px;
`;

const SafeName = styled(LayerName)`
  padding-left: 5px;
`;

const LayerScroll = styled.div`
  display: flex;
  flex-direction: column;
  align-items: center;
  width: 11px;
  background: #373535;
  font-family: "DejaVu Sans", sans-serif;
  font-size: 5px;

  span {
    padding: 3px 0;
    line-height: 6px;
  }
`;

const LayerThumb = styled.div`
  width: 8px;
  height: 128px;
  background: linear-gradient(90deg, #b0a8a7, #8f8887);
  border-radius: 2px;
`;

const LayersFooter = styled.div`
  display: flex;
  flex: none;
  align-items: center;
  gap: 9px;
  height: 14px;
  padding: 2px 0 0 25px;
  border-top: 1px solid #7b7675;
  color: #cdc7c6;
`;

const FooterFx = styled(Fx)`
  margin-left: 0;
  padding-right: 0;
`;
